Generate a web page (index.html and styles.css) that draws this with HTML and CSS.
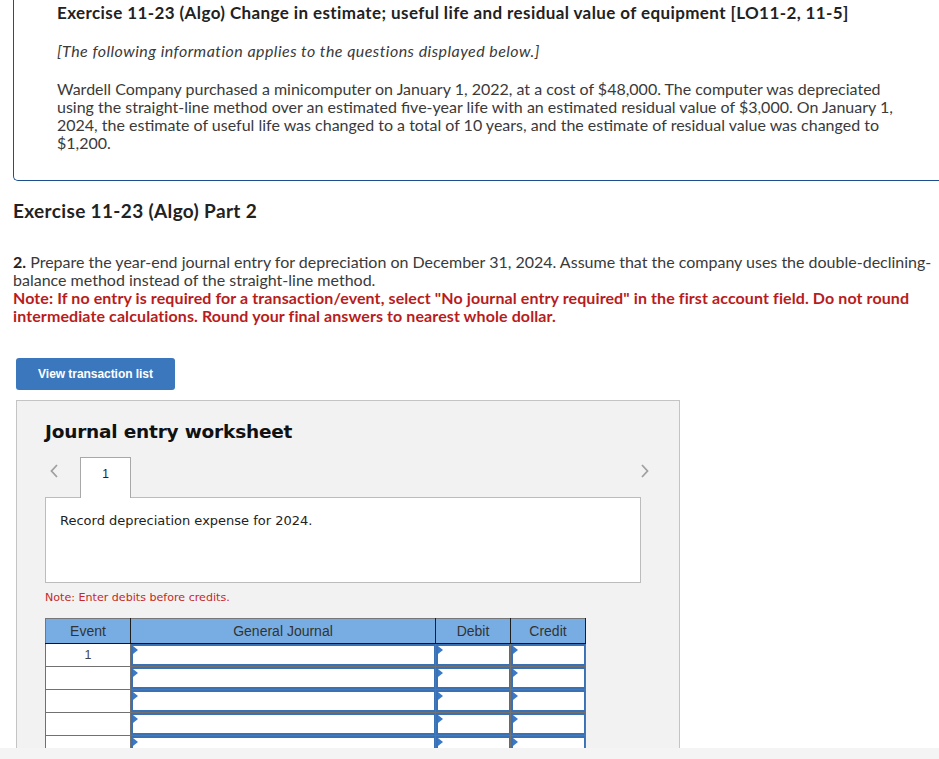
FILE: index.html
```html
<!DOCTYPE html>
<html>
<head>
<meta charset="utf-8">
<link rel="stylesheet" href="styles.css">
</head>
<body>
<div class="page">
  <div class="intro">
    <h1 class="ex-title">Exercise 11-23 (Algo) Change in estimate; useful life and residual value of equipment [LO11-2, 11-5]</h1>
    <p class="ital">[The following information applies to the questions displayed below.]</p>
    <p class="para">Wardell Company purchased a minicomputer on January 1, 2022, at a cost of $48,000. The computer was depreciated using the straight-line method over an estimated five-year life with an estimated residual value of $3,000. On January 1, 2024, the estimate of useful life was changed to a total of 10 years, and the estimate of residual value was changed to $1,200.</p>
  </div>

  <h2 class="part-title">Exercise 11-23 (Algo) Part 2</h2>

  <div class="question">
    <p class="q"><b class="num">2.</b> Prepare the year-end journal entry for depreciation on December 31, 2024. Assume that the company uses the double-declining-balance method instead of the straight-line method.</p>
    <p class="note">Note: If no entry is required for a transaction/event, select "No journal entry required" in the first account field. Do not round intermediate calculations. Round your final answers to nearest whole dollar.</p>
  </div>

  <button class="btn">View transaction list</button>

  <div class="ws">
    <h3 class="ws-title">Journal entry worksheet</h3>
    <div class="tabs">
      <span class="chev">
        <svg width="12" height="18" viewBox="0 0 12 18"><path d="M9 3 L3.5 9 L9 15" fill="none" stroke="#a0a0a0" stroke-width="1.8"/></svg>
      </span>
      <div class="tab">1</div>
      <span class="chev right">
        <svg width="12" height="18" viewBox="0 0 12 18"><path d="M3 3 L8.5 9 L3 15" fill="none" stroke="#a0a0a0" stroke-width="1.8"/></svg>
      </span>
    </div>
    <div class="desc">Record depreciation expense for 2024.</div>
    <p class="ws-note">Note: Enter debits before credits.</p>
    <table class="jt">
      <thead>
        <tr><th class="c-ev">Event</th><th class="c-gj">General Journal</th><th class="c-dr">Debit</th><th class="c-cr">Credit</th></tr>
      </thead>
      <tbody>
        <tr><td class="ev">1</td><td class="in"><div class="box"></div></td><td class="in"><div class="box"></div></td><td class="in"><div class="box"></div></td></tr>
        <tr><td class="ev"></td><td class="in"><div class="box"></div></td><td class="in"><div class="box"></div></td><td class="in"><div class="box"></div></td></tr>
        <tr><td class="ev"></td><td class="in"><div class="box"></div></td><td class="in"><div class="box"></div></td><td class="in"><div class="box"></div></td></tr>
        <tr><td class="ev"></td><td class="in"><div class="box"></div></td><td class="in"><div class="box"></div></td><td class="in"><div class="box"></div></td></tr>
        <tr><td class="ev"></td><td class="in"><div class="box"></div></td><td class="in"><div class="box"></div></td><td class="in"><div class="box"></div></td></tr>
      </tbody>
    </table>
  </div>
</div>
<div class="bottom-strip"></div>
</body>
</html>
```

FILE: styles.css
```css
html, body {
  margin: 0;
  padding: 0;
  background: #fff;
  overflow: hidden;
}
.page {
  height: 748px;
  overflow: hidden;
  font-family: Lato, "Liberation Sans", sans-serif;
  color: #3a3a3a;
}
.bottom-strip {
  height: 11px;
  background: #f4f4f4;
}
.intro {
  margin-left: 13px;
  margin-top: -10px;
  border: 1.5px solid #1d4f8f;
  border-right: none;
  border-radius: 0 0 0 5px;
  padding: 11px 45px 28px 43px;
}
.ex-title {
  margin: 0;
  font-size: 17px;
  font-weight: 700;
  color: #222;
  line-height: 22px;
  letter-spacing: 0.4px;
}
.ital {
  margin: 17px 0 0;
  font-style: italic;
  font-size: 16px;
  line-height: 20px;
  letter-spacing: 0.45px;
}
.para {
  margin: 19px 0 0;
  font-size: 16px;
  line-height: 18px;
}
.part-title {
  margin: 18px 0 0 13px;
  font-size: 19px;
  font-weight: 700;
  color: #222;
  line-height: 24px;
  letter-spacing: 0.35px;
}
.question {
  margin: 30px 0 0 13px;
}
.q, .note {
  margin: 0;
  font-size: 16px;
  line-height: 18px;
}
.num {
  color: #222;
}
.note {
  color: #b81c1c;
  font-weight: 700;
  letter-spacing: 0.1px;
}
.btn {
  display: block;
  margin: 33px 0 0 16px;
  width: 159px;
  height: 32px;
  border: none;
  border-radius: 3px;
  background: #3a77bd;
  color: #fff;
  font-family: "Liberation Sans", Arial, sans-serif;
  font-weight: 700;
  font-size: 12px;
  letter-spacing: -0.05px;
  padding: 0;
}
.ws {
  margin: 10px 0 0 16px;
  width: 664px;
  height: 360px;
  background: #f2f2f2;
  border: 1px solid #c4c4c4;
  padding: 0 28px;
  box-sizing: border-box;
  font-family: "DejaVu Sans", Verdana, sans-serif;
}
.ws-title {
  margin: 19px 0 0;
  font-size: 18.5px;
  font-weight: 700;
  color: #111;
  line-height: 24px;
  letter-spacing: -0.2px;
}
.tabs {
  display: flex;
  align-items: flex-start;
  margin-top: 13px;
  height: 40px;
  width: 606px;
}
.chev {
  width: 35px;
  padding-top: 5px;
  padding-left: 3px;
  box-sizing: border-box;
}
.chev.right {
  margin-left: auto;
  width: auto;
  padding-top: 5px;
  padding-left: 0;
}
.tab {
  width: 51px;
  height: 41px;
  box-sizing: border-box;
  background: #fff;
  border: 1px solid #a8a8a8;
  border-bottom: none;
  text-align: center;
  font-family: "Liberation Sans", Arial, sans-serif;
  font-size: 12px;
  color: #222;
  padding-top: 9px;
  position: relative;
  z-index: 1;
}
.desc {
  width: 596px;
  height: 86px;
  box-sizing: border-box;
  background: #fff;
  border: 1px solid #bcbcbc;
  padding: 14px 14px;
  font-size: 13px;
  color: #222;
  line-height: 18px;
}
.ws-note {
  margin: 8px 0 0;
  font-size: 11.1px;
  color: #c62828;
  line-height: 14px;
}
.jt {
  margin-top: 13px;
  border-collapse: collapse;
  table-layout: fixed;
  width: 536px;
  font-family: "Liberation Sans", Arial, sans-serif;
}
.jt th {
  background: #78ade3;
  color: #333;
  font-size: 14px;
  font-weight: 400;
  height: 24px;
  padding: 0;
  border: 1px solid #1e1e1e;
  border-top: 1px solid #777;
  border-bottom: 1.5px solid #111;
}
.jt th.c-ev { width: 84px; border-left-color: #777; }
.jt th.c-gj { width: 304px; }
.jt th.c-dr { width: 74px; }
.jt th.c-cr { width: 74px; }
.jt td {
  height: 22px;
  padding: 0;
  border: 1px solid #717171;
  background: #fff;
}
.jt td.ev {
  text-align: center;
  font-size: 12.5px;
  color: #444;
  vertical-align: middle;
}
.box {
  height: 22px;
  box-sizing: border-box;
  border: 2px solid #3a70b4;
  border-right-width: 1px;
  position: relative;
}
.box::before {
  content: "";
  position: absolute;
  left: 0;
  top: 0;
  border-left: 5px solid #3a78c9;
  border-top: 4px solid transparent;
  border-bottom: 4px solid transparent;
}
```
